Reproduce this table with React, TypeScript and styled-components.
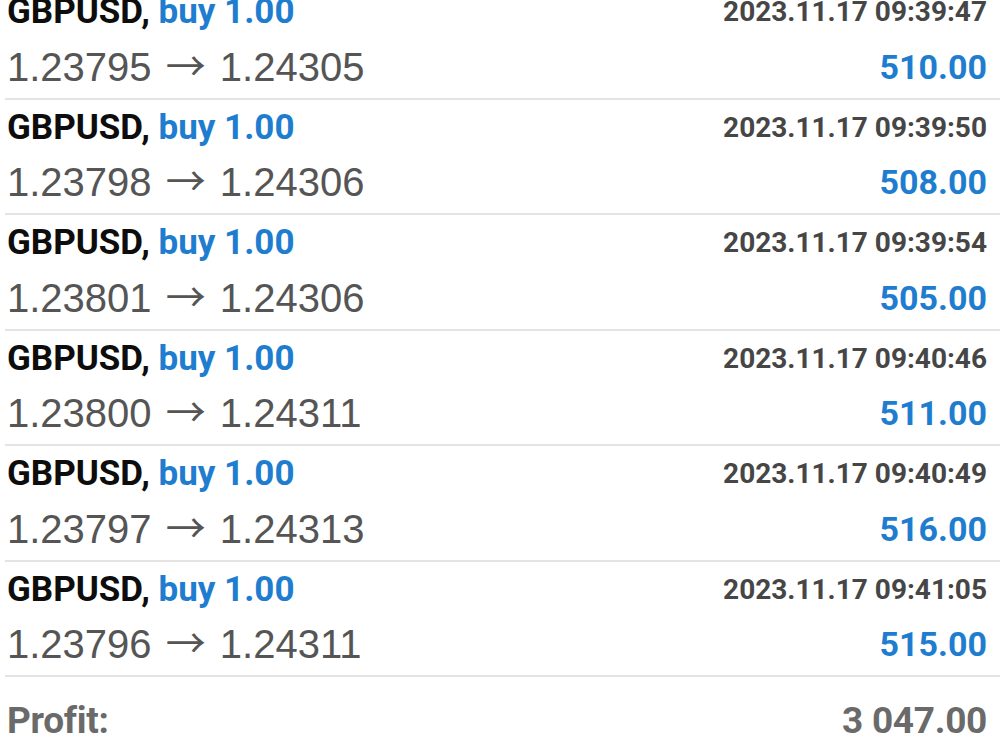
import React from 'react';
import styled, { createGlobalStyle } from 'styled-components';

type Trade = {
    symbol: string;
    side: string;
    volume: string;
    open: string;
    close: string;
    time: string;
    profit: string;
};

const trades: Trade[] = [
    { symbol: 'GBPUSD', side: 'buy', volume: '1.00', open: '1.23795', close: '1.24305', time: '2023.11.17 09:39:47', profit: '510.00' },
    { symbol: 'GBPUSD', side: 'buy', volume: '1.00', open: '1.23798', close: '1.24306', time: '2023.11.17 09:39:50', profit: '508.00' },
    { symbol: 'GBPUSD', side: 'buy', volume: '1.00', open: '1.23801', close: '1.24306', time: '2023.11.17 09:39:54', profit: '505.00' },
    { symbol: 'GBPUSD', side: 'buy', volume: '1.00', open: '1.23800', close: '1.24311', time: '2023.11.17 09:40:46', profit: '511.00' },
    { symbol: 'GBPUSD', side: 'buy', volume: '1.00', open: '1.23797', close: '1.24313', time: '2023.11.17 09:40:49', profit: '516.00' },
    { symbol: 'GBPUSD', side: 'buy', volume: '1.00', open: '1.23796', close: '1.24311', time: '2023.11.17 09:41:05', profit: '515.00' },
];

export default function App() {
    return (
        <>
            <GlobalStyle />
            <HistoryList>
                {trades.map((t) => (
                    <TradeRow key={t.time}>
                        <TopLine>
                            <Title>
                                <Symbol>{t.symbol},</Symbol> <Side>{t.side} {t.volume}</Side>
                            </Title>
                            <Time>{t.time}</Time>
                        </TopLine>
                        <BottomLine>
                            <Prices>
                                {t.open} <Arrow>→</Arrow> {t.close}
                            </Prices>
                            <Amount>{t.profit}</Amount>
                        </BottomLine>
                    </TradeRow>
                ))}
                <Summary>
                    <SummaryText>Profit:</SummaryText>
                    <SummaryText>3 047.00</SummaryText>
                </Summary>
            </HistoryList>
        </>
    );
}

const GlobalStyle = createGlobalStyle`
    html, body {
        margin: 0;
        padding: 0;
        background: #fff;
        overflow: hidden;
    }
    body {
        font-family: "Liberation Sans", Arial, sans-serif;
    }
`;

const HistoryList = styled.div`
    margin-top: -16px;
    display: flex;
    flex-direction: column;
`;

const TradeRow = styled.div`
    height: 115.5px;
    box-sizing: border-box;
    margin-left: 5px;
    padding: 6px 13px 0 2px;
    border-bottom: 2px solid #e4e4e4;
    display: flex;
    flex-direction: column;
    gap: 8.5px;
`;

const TopLine = styled.div`
    height: 44px;
    display: flex;
    align-items: center;
    justify-content: space-between;
`;

const BottomLine = styled.div`
    height: 48px;
    display: flex;
    align-items: center;
    justify-content: space-between;
`;

const Title = styled.div`
    font-family: Roboto, "Liberation Sans", sans-serif;
    font-size: 35px;
    line-height: 44px;
    font-weight: 700;
    white-space: nowrap;
`;

const Symbol = styled.span`
    color: #0d0d0d;
`;

const Side = styled.span`
    color: #1f7dd0;
`;

const Time = styled.div`
    font-family: Roboto, "Liberation Sans", sans-serif;
    font-size: 28px;
    line-height: 44px;
    font-weight: 700;
    color: #464646;
`;

const Prices = styled.div`
    font-size: 40px;
    line-height: 48px;
    color: #555;
    white-space: nowrap;
`;

const Arrow = styled.span`
    font-family: "Noto Sans CJK SC", "DejaVu Sans", sans-serif;
    font-size: 40px;
    line-height: 1;
    font-weight: 400;
    margin: 0 3px;
`;

const Amount = styled.div`
    font-family: Roboto, "Liberation Sans", sans-serif;
    font-size: 34px;
    line-height: 48px;
    font-weight: 700;
    color: #1f7dd0;
`;

const Summary = styled.div`
    margin-left: 5px;
    padding: 20px 13px 0 2px;
    height: 48px;
    display: flex;
    align-items: center;
    justify-content: space-between;
`;

const SummaryText = styled.div`
    font-family: Roboto, "Liberation Sans", sans-serif;
    font-size: 37px;
    line-height: 48px;
    font-weight: 700;
    letter-spacing: -0.3px;
    color: #6a6a6a;
`;
